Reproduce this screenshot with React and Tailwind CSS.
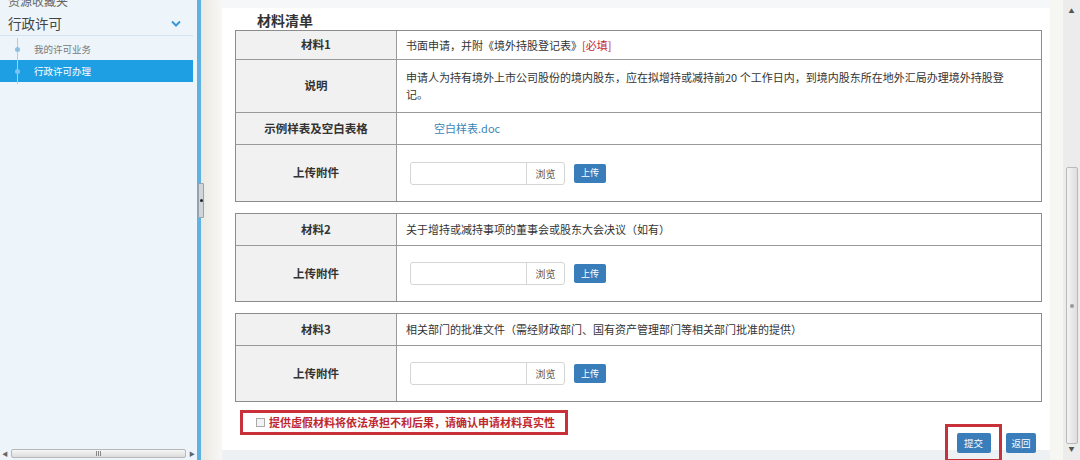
import React from "react";

const font = { fontFamily: '"Noto Sans CJK SC", "Noto Sans", sans-serif' };

function UploadCell() {
  return (
    <div className="flex items-center pl-[13px]">
      <div className="flex h-[23px] rounded-[3px] border border-[#d5d5d5] bg-white">
        <div className="w-[116px] border-r border-[#d5d5d5]" />
        <div className="flex w-[37px] items-center justify-center text-[10px] text-[#555]">浏览</div>
      </div>
      <button className="ml-[9px] flex h-[19px] w-[32px] items-center justify-center rounded-[2px] bg-[#3a7dbb] text-[9px] text-white">
        上传
      </button>
    </div>
  );
}

function Row({ label, h, children, last }) {
  return (
    <div className={`flex ${last ? "" : "border-b border-[#9a9a9a]"}`} style={{ height: h }}>
      <div className="flex w-[161px] shrink-0 items-center justify-center border-r border-[#9a9a9a] bg-[#f1f1f1] text-[11.5px] font-bold text-[#333]">
        {label}
      </div>
      <div className="flex flex-1 items-center">{children}</div>
    </div>
  );
}

function Text({ children }) {
  return <div className="max-w-[626px] px-[9px] text-[11px] leading-[17px] text-[#333]">{children}</div>;
}

function MaterialTable({ rows }) {
  return (
    <div className="shrink-0 border border-[#8c8c8c] bg-white">
      {rows.map((r, i) => (
        <Row key={i} label={r.label} h={r.h} last={i === rows.length - 1}>
          {r.content}
        </Row>
      ))}
    </div>
  );
}

export default function App() {
  return (
    <div className="flex h-[460px] w-[1080px] overflow-hidden bg-white" style={font}>
      {/* Sidebar */}
      <div className="flex w-[197px] shrink-0 flex-col bg-[#eef5fa]">
        <div className="-mt-[8px] pl-[8px] text-[12px] text-[#666]">资源收藏夹</div>
        <div className="mr-[4px] mt-[1px] flex h-[25px] items-center justify-between border-b border-[#d3e2ee] pl-[8px] pr-[12px]">
          <span className="text-[13.5px] text-[#444]">行政许可</span>
          <svg width="10" height="7" viewBox="0 0 10 7">
            <path d="M1 1.5 L5 5.5 L9 1.5" fill="none" stroke="#3a98d6" strokeWidth="2" />
          </svg>
        </div>
        <div className="relative mr-[4px] mt-[2px]">
          <div className="absolute left-[17px] top-0 h-[46px] w-px bg-[#a9cfe8]" />
          <div className="flex h-[22px] items-center pl-[34px] text-[9.5px] text-[#777]">
            <span className="absolute left-[15px] h-[5px] w-[5px] rounded-full bg-[#8fbfe0]" />
            我的许可业务
          </div>
          <div className="flex h-[22px] items-center bg-[#1f9fe3] pl-[34px] text-[9.5px] text-white">
            <span className="absolute left-[15px] h-[5px] w-[5px] rounded-full bg-[#7cc4ee]" />
            行政许可办理
          </div>
        </div>
        <div className="flex-1" />
        {/* horizontal scrollbar */}
        <div className="mb-[1px] flex h-[11px] items-center gap-[3px] px-[2px]">
          <span className="text-[6px] text-[#666]">◀</span>
          <div className="flex h-[9px] flex-1 items-center justify-center rounded-[2px] border border-[#b8b8b8] bg-gradient-to-b from-[#f6f6f6] to-[#dcdcdc]">
            <div className="flex gap-[1px]">
              <span className="h-[5px] w-px bg-[#888]" />
              <span className="h-[5px] w-px bg-[#888]" />
              <span className="h-[5px] w-px bg-[#888]" />
            </div>
          </div>
          <span className="text-[6px] text-[#666]">▶</span>
        </div>
      </div>

      {/* Splitter */}
      <div className="relative w-[4px] shrink-0 bg-[#5fb1e2]">
        <div className="absolute left-[1px] top-[183px] z-10 flex h-[35px] w-[6px] items-center justify-center rounded-[1px] border border-[#9aa3ad] bg-[#cfd5dc]">
          <span className="h-[3px] w-[3px] rounded-full bg-[#222]" />
        </div>
      </div>
      <div className="w-[21px] shrink-0 bg-gradient-to-r from-[#ebe9e2] to-[#f7f7f5]" />

      {/* Main */}
      <div className="flex flex-1 flex-col bg-[#f6f7f8]">
        <div className="h-[8px] shrink-0" />
        <div className="flex h-[442px] shrink-0 flex-col bg-white pl-[13px] pr-[8px]">
          <div className="flex h-[22px] shrink-0 items-end pb-[3px] pl-[22px] text-[14px] font-bold leading-none text-[#333]">
            材料清单
          </div>
          <MaterialTable
            rows={[
              {
                label: "材料1",
                h: 29,
                content: (
                  <Text>
                    书面申请，并附《境外持股登记表》<span className="text-[#c0282f]">[必填]</span>
                  </Text>
                ),
              },
              {
                label: "说明",
                h: 53,
                content: (
                  <Text>
                    申请人为持有境外上市公司股份的境内股东，应在拟增持或减持前20 个工作日内，到境内股东所在地外汇局办理境外持股登记。
                  </Text>
                ),
              },
              {
                label: "示例样表及空白表格",
                h: 32,
                content: <div className="pl-[37px] text-[11px] text-[#3a86b8]">空白样表.doc</div>,
              },
              { label: "上传附件", h: 56, content: <UploadCell /> },
            ]}
          />
          <div className="h-[11px] shrink-0" />
          <MaterialTable
            rows={[
              { label: "材料2", h: 32, content: <Text>关于增持或减持事项的董事会或股东大会决议（如有）</Text> },
              { label: "上传附件", h: 55, content: <UploadCell /> },
            ]}
          />
          <div className="h-[11px] shrink-0" />
          <MaterialTable
            rows={[
              {
                label: "材料3",
                h: 32,
                content: <Text>相关部门的批准文件（需经财政部门、国有资产管理部门等相关部门批准的提供）</Text>,
              },
              { label: "上传附件", h: 55, content: <UploadCell /> },
            ]}
          />
          <div className="mt-[8px] flex items-start justify-between">
            <div className="ml-[5px] flex h-[25px] w-[328px] items-center gap-[4px] border-[3px] border-[#c8303a] pl-[13px]">
              <span className="h-[9px] w-[9px] shrink-0 border border-[#aaa] bg-[#f3f3f3]" />
              <span className="whitespace-nowrap text-[11px] font-bold text-[#c0272d]">提供虚假材料将依法承担不利后果，请确认申请材料真实性</span>
            </div>
            <div className="relative z-10 mr-[6px] mt-[23px] flex items-start gap-[4px]">
              <div className="-mt-[9px] flex h-[38px] w-[57px] shrink-0 items-start justify-center border-[3px] border-[#c8303a] pt-[6px]">
                <button className="flex h-[20px] w-[34px] items-center justify-center rounded-[2px] bg-[#3a7dbb] text-[9.5px] text-white">
                  提交
                </button>
              </div>
              <button className="flex h-[20px] w-[30px] items-center justify-center rounded-[2px] bg-[#3a7dbb] text-[9.5px] text-white">
                返回
              </button>
            </div>
          </div>
        </div>
        <div className="flex-1 bg-[#eef1f4]" />
      </div>

      {/* Right scroll area */}
      <div className="w-[13px] shrink-0 bg-[#f6f6f3]" />
      <div className="flex w-[17px] shrink-0 flex-col items-center bg-[#ececec] py-[8px]">
        <span className="text-[6px] leading-none text-[#555]">▲</span>
        <div className="flex-1" />
        <div className="flex h-[277px] w-[12px] items-center justify-center rounded-[2px] border border-[#b9b9b9] bg-gradient-to-r from-[#f4f4f4] to-[#dedede]">
          <span className="h-[4px] w-[4px] rounded-full bg-[#999]" />
        </div>
        <span className="mt-[2px] text-[6px] leading-none text-[#555]">▼</span>
      </div>
    </div>
  );
}
